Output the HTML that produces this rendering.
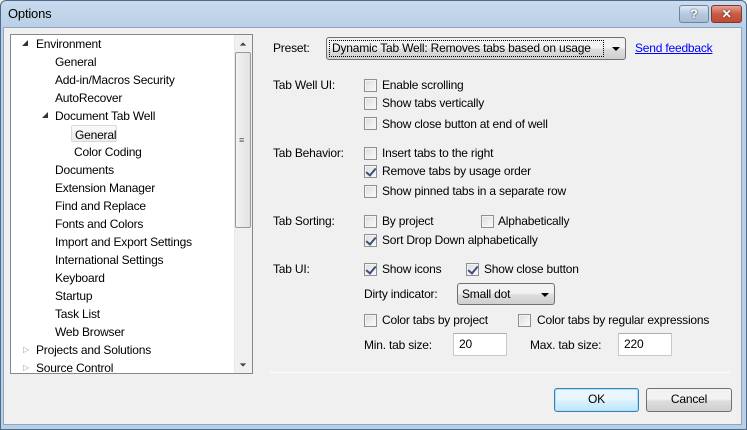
<!DOCTYPE html>
<html><head><meta charset="utf-8"><style>
*{box-sizing:border-box;margin:0;padding:0}
body{width:747px;height:430px;overflow:hidden;font-family:"Liberation Sans",sans-serif;font-size:12px;letter-spacing:-0.2px;color:#000;background:#f0f0f0;position:relative}
.a{position:absolute;white-space:nowrap}
#frame{position:absolute;left:0;top:0;width:747px;height:430px;border:1px solid #4d6a8a;border-radius:6px 6px 0 0;background:linear-gradient(#c9dbed,#b9cfe6 28px,#b9cfe6)}
#client{position:absolute;left:3px;top:27px;width:739px;height:398px;background:#f0f0f0;border:1px solid #8ea6c0}
.cb{position:absolute;width:13px;height:13px;border:1px solid #8f8f8f;background:linear-gradient(135deg,#dcdcdc,#fbfbfb);box-shadow:inset 0 0 0 1px #f4f4f4}
.cb.c::after{content:"";position:absolute;left:3px;top:0px;width:4px;height:8px;border:solid #3a4f7a;border-width:0 2px 2px 0;transform:rotate(40deg)}
.tx{position:absolute;background:#fff;border:1px solid #c5c9d0;border-top-color:#abadb3;padding:3px 5px;height:23px}
.btn{position:absolute;border:1px solid #707070;border-radius:3px;background:linear-gradient(#f2f2f2 45%,#dddddd 55%,#cfcfcf);text-align:center;line-height:21px}
.tri{position:absolute;width:0;height:0;border-left:4px solid transparent;border-right:4px solid transparent;border-top:4px solid #000}
</style></head><body>
<div id="frame"></div>
<div class="a" style="left:8px;top:6px;font-size:13px;color:#000">Options</div>
<div class="a" style="left:679px;top:5px;width:30px;height:18px;border:1px solid #6d83a0;border-radius:3px;background:linear-gradient(#dfe9f5,#b7c9de 50%,#a6bcd6);text-align:center;font-weight:bold;color:#fff;text-shadow:0 0 2px #333;line-height:16px">?</div>
<div class="a" style="left:711px;top:5px;width:31px;height:18px;border:1px solid #7a3a2e;border-radius:3px;background:linear-gradient(#e8a393,#c95a45 50%,#c04b33);text-align:center;font-weight:bold;color:#fff;text-shadow:0 0 2px #333;line-height:16px">✕</div>
<div id="client"></div>

<div class="a" style="left:10px;top:34px;width:243px;height:340px;background:#fff;border:1px solid #828790;overflow:hidden">
 <div class="a" style="left:223px;top:0;width:18px;height:338px;background:#f0f0f0;border-left:1px solid #e8e8e8"></div>
 <div class="a" style="left:224px;top:17px;width:16px;height:176px;border:1px solid #9a9a9a;border-radius:2px;background:linear-gradient(90deg,#f2f2f2,#e2e2e2)"></div>
 <div class="a" style="left:228px;top:100px;font-size:9px;color:#555">≡</div>
 <div class="tri" style="left:228px;top:7px;border-top:0;border-bottom:4px solid #444;transform:scale(.8)"></div>
 <div class="tri" style="left:228px;top:328px;border-top:4px solid #444;transform:scale(.8)"></div>
</div>
<div class="a" style="left:22px;top:40px;width:0;height:0;border-left:6px solid transparent;border-bottom:6px solid #333"></div>
<div class="a" style="left:42px;top:112px;width:0;height:0;border-left:6px solid transparent;border-bottom:6px solid #333"></div>
<div class="a" style="left:23px;top:345px;color:#999;font-size:8px">▷</div>
<div class="a" style="left:23px;top:363px;color:#999;font-size:8px">▷</div>
<div class="a" style="left:36px;top:37px">Environment</div>
<div class="a" style="left:55px;top:55px">General</div>
<div class="a" style="left:55px;top:73px">Add-in/Macros Security</div>
<div class="a" style="left:55px;top:91px">AutoRecover</div>
<div class="a" style="left:55px;top:109px">Document Tab Well</div>
<div class="a" style="left:71px;top:125px;width:46px;height:17px;border:1px solid #d9d9d9;border-radius:2px;background:linear-gradient(#fafafa,#ececec);padding:2px 0 0 3px">General</div>
<div class="a" style="left:74px;top:145px">Color Coding</div>
<div class="a" style="left:55px;top:163px">Documents</div>
<div class="a" style="left:55px;top:181px">Extension Manager</div>
<div class="a" style="left:55px;top:199px">Find and Replace</div>
<div class="a" style="left:55px;top:217px">Fonts and Colors</div>
<div class="a" style="left:55px;top:235px">Import and Export Settings</div>
<div class="a" style="left:55px;top:253px">International Settings</div>
<div class="a" style="left:55px;top:271px">Keyboard</div>
<div class="a" style="left:55px;top:289px">Startup</div>
<div class="a" style="left:55px;top:307px">Task List</div>
<div class="a" style="left:55px;top:325px">Web Browser</div>
<div class="a" style="left:36px;top:343px">Projects and Solutions</div>
<div style="position:absolute;left:11px;top:361px;width:222px;height:12px;overflow:hidden"><div class="a" style="left:25px;top:0">Source Control</div></div>

<div class="a" style="left:273px;top:41px">Preset:</div>
<div class="btn" style="left:326px;top:37px;width:300px;height:23px;text-align:left;border-radius:3px">
 <div class="a" style="left:2px;top:2px;width:275px;height:17px;border:1px dotted #000;line-height:15px;padding-left:2px">Dynamic Tab Well: Removes tabs based on usage</div>
 <div class="tri" style="left:285px;top:9px"></div>
</div>
<div class="a" style="left:635px;top:41px;color:#0000ff;text-decoration:underline">Send feedback</div>

<div class="a" style="left:273px;top:78px">Tab Well UI:</div>
<div class="cb" style="left:364px;top:79px"></div><div class="a" style="left:382px;top:78px">Enable scrolling</div>
<div class="cb" style="left:364px;top:97px"></div><div class="a" style="left:382px;top:96px">Show tabs vertically</div>
<div class="cb" style="left:364px;top:117px"></div><div class="a" style="left:382px;top:117px">Show close button at end of well</div>

<div class="a" style="left:273px;top:146px">Tab Behavior:</div>
<div class="cb" style="left:364px;top:147px"></div><div class="a" style="left:382px;top:146px">Insert tabs to the right</div>
<div class="cb c" style="left:364px;top:165px"></div><div class="a" style="left:382px;top:164px">Remove tabs by usage order</div>
<div class="cb" style="left:364px;top:185px"></div><div class="a" style="left:382px;top:184px">Show pinned tabs in a separate row</div>

<div class="a" style="left:273px;top:214px">Tab Sorting:</div>
<div class="cb" style="left:364px;top:215px"></div><div class="a" style="left:382px;top:214px">By project</div>
<div class="cb" style="left:481px;top:215px"></div><div class="a" style="left:498px;top:214px">Alphabetically</div>
<div class="cb c" style="left:364px;top:234px"></div><div class="a" style="left:382px;top:233px">Sort Drop Down alphabetically</div>

<div class="a" style="left:273px;top:262px">Tab UI:</div>
<div class="cb c" style="left:364px;top:263px"></div><div class="a" style="left:382px;top:262px">Show icons</div>
<div class="cb c" style="left:466px;top:263px"></div><div class="a" style="left:484px;top:262px">Show close button</div>
<div class="a" style="left:364px;top:287px">Dirty indicator:</div>
<div class="btn" style="left:457px;top:283px;width:98px;height:22px;text-align:left;padding-left:4px;line-height:20px">Small dot<div class="tri" style="left:83px;top:9px"></div></div>
<div class="cb" style="left:364px;top:314px"></div><div class="a" style="left:382px;top:313px">Color tabs by project</div>
<div class="cb" style="left:518px;top:314px"></div><div class="a" style="left:537px;top:313px">Color tabs by regular expressions</div>
<div class="a" style="left:364px;top:338px">Min. tab size:</div>
<div class="tx" style="left:453px;top:333px;width:54px">20</div>
<div class="a" style="left:530px;top:338px">Max. tab size:</div>
<div class="tx" style="left:618px;top:333px;width:54px">220</div>

<div class="a" style="left:270px;top:372px;width:460px;height:1px;background:#a0a0a0;border-bottom:1px solid #fff"></div>
<div class="btn" style="left:554px;top:388px;width:85px;height:24px;border-color:#3c7fb1;box-shadow:inset 0 0 0 1px #a8e0f8;background:linear-gradient(#eaf6fd 45%,#d9f0fc 55%,#bee6fd)">OK</div>
<div class="btn" style="left:646px;top:388px;width:86px;height:24px">Cancel</div>
</body></html>
